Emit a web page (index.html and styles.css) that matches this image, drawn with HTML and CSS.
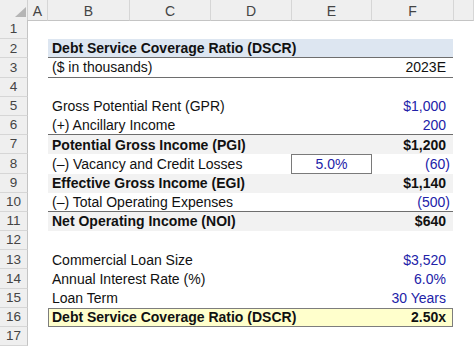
FILE: index.html
```html
<!DOCTYPE html>
<html>
<head>
<meta charset="utf-8">
<link rel="stylesheet" href="styles.css">
</head>
<body>
<div class="sheet">
  <div class="hdr-row">
    <div class="corner"><svg width="28" height="20" viewBox="0 0 28 20"><polygon points="26,7 26,17 15,17" fill="#b5b5b5"/></svg></div>
    <div class="ch c-a">A</div>
    <div class="ch c-b">B</div>
    <div class="ch c-c">C</div>
    <div class="ch c-d">D</div>
    <div class="ch c-e">E</div>
    <div class="ch c-f">F</div>
    <div class="ch c-g"></div>
  </div>

  <div class="row"><div class="rh">1</div><div class="ca"></div><div class="band"></div><div class="cg"></div></div>

  <div class="row"><div class="rh">2</div><div class="ca"></div>
    <div class="band title bb"><div class="lbl bold">Debt Service Coverage Ratio (DSCR)</div><div class="e"></div><div class="f"></div></div>
    <div class="cg"></div></div>

  <div class="row"><div class="rh">3</div><div class="ca"></div>
    <div class="band bb"><div class="lbl">($ in thousands)</div><div class="e"></div><div class="f">2023E</div></div>
    <div class="cg"></div></div>

  <div class="row"><div class="rh">4</div><div class="ca"></div><div class="band"></div><div class="cg"></div></div>

  <div class="row"><div class="rh">5</div><div class="ca"></div>
    <div class="band"><div class="lbl">Gross Potential Rent (GPR)</div><div class="e"></div><div class="f blue">$1,000</div></div>
    <div class="cg"></div></div>

  <div class="row"><div class="rh">6</div><div class="ca"></div>
    <div class="band bb"><div class="lbl">(+) Ancillary Income</div><div class="e"></div><div class="f blue">200</div></div>
    <div class="cg"></div></div>

  <div class="row"><div class="rh">7</div><div class="ca"></div>
    <div class="band gray"><div class="lbl bold">Potential Gross Income (PGI)</div><div class="e"></div><div class="f bold">$1,200</div></div>
    <div class="cg"></div></div>

  <div class="row"><div class="rh">8</div><div class="ca"></div>
    <div class="band"><div class="lbl">(–) Vacancy and Credit Losses</div><div class="e boxed blue">5.0%</div><div class="f neg blue">(60)</div></div>
    <div class="cg"></div></div>

  <div class="row"><div class="rh">9</div><div class="ca"></div>
    <div class="band gray"><div class="lbl bold">Effective Gross Income (EGI)</div><div class="e"></div><div class="f bold">$1,140</div></div>
    <div class="cg"></div></div>

  <div class="row"><div class="rh">10</div><div class="ca"></div>
    <div class="band bb"><div class="lbl">(–) Total Operating Expenses</div><div class="e"></div><div class="f neg blue">(500)</div></div>
    <div class="cg"></div></div>

  <div class="row"><div class="rh">11</div><div class="ca"></div>
    <div class="band gray"><div class="lbl bold">Net Operating Income (NOI)</div><div class="e"></div><div class="f bold">$640</div></div>
    <div class="cg"></div></div>

  <div class="row"><div class="rh">12</div><div class="ca"></div><div class="band"></div><div class="cg"></div></div>

  <div class="row"><div class="rh">13</div><div class="ca"></div>
    <div class="band"><div class="lbl">Commercial Loan Size</div><div class="e"></div><div class="f blue">$3,520</div></div>
    <div class="cg"></div></div>

  <div class="row"><div class="rh">14</div><div class="ca"></div>
    <div class="band"><div class="lbl">Annual Interest Rate (%)</div><div class="e"></div><div class="f blue">6.0%</div></div>
    <div class="cg"></div></div>

  <div class="row"><div class="rh">15</div><div class="ca"></div>
    <div class="band"><div class="lbl">Loan Term</div><div class="e"></div><div class="f blue">30 Years</div></div>
    <div class="cg"></div></div>

  <div class="row"><div class="rh">16</div><div class="ca"></div>
    <div class="band result"><div class="lbl bold">Debt Service Coverage Ratio (DSCR)</div><div class="e"></div><div class="f bold">2.50x</div></div>
    <div class="cg"></div></div>

  <div class="row"><div class="rh">17</div><div class="ca"></div><div class="band"></div><div class="cg"></div></div>
</div>
</body>
</html>
```

FILE: styles.css
```css
* { box-sizing: border-box; }
html, body { margin: 0; padding: 0; background: #fff; overflow: hidden; }
body { width: 474px; height: 351px; font-family: "Liberation Sans", Arial, sans-serif; font-size: 14px; color: #111; }

.sheet { display: flex; flex-direction: column; }

.hdr-row {
  display: grid;
  grid-template-columns: 28px 20px 82px 81px 81px 80px 82px 1fr;
  height: 20px;
}
.corner { background: #efefef; border-right: 1px solid #d0d0d0; border-bottom: 1px solid #c4c4c4; }
.corner svg { display: block; }
.ch {
  background: #efefef;
  border-right: 1px solid #d6d6d6;
  border-bottom: 1px solid #c4c4c4;
  color: #444;
  font-size: 14px;
  display: flex; align-items: center; justify-content: center;
  line-height: 1;
  padding-top: 1px;
}

.row {
  display: grid;
  grid-template-columns: 28px 20px 405px 1fr;
  height: 19.2px;
}
.rh {
  background: #efefef;
  border-right: 1px solid #c4c4c4;
  border-bottom: 1px solid #d6d6d6;
  color: #444;
  font-size: 13.5px;
  display: flex; align-items: center; justify-content: center;
  line-height: 1;
}

.band {
  display: grid;
  grid-template-columns: 244px 80px 1fr;
  align-items: stretch;
}
.lbl, .e, .f {
  display: flex; align-items: center;
  white-space: nowrap;
  line-height: 1;
}
.lbl { padding-left: 4px; }
.e { justify-content: center; }
.f { justify-content: flex-end; padding-right: 7px; }
.f.neg { padding-right: 3px; }

.bold { font-weight: bold; }
.blue { color: #2222a8; }

.bb { border-bottom: 1px solid #6e6e6e; }
.title { background: #dde6f1; }
.gray { background: #f2f2f2; }
.boxed { border: 1px solid #7a7a7a; margin-left: -1px; }
.result { background: #ffffcc; border: 1px solid #7d7d7d; }
.result .lbl { padding-left: 3px; }
.result .f { padding-right: 6px; }
```
